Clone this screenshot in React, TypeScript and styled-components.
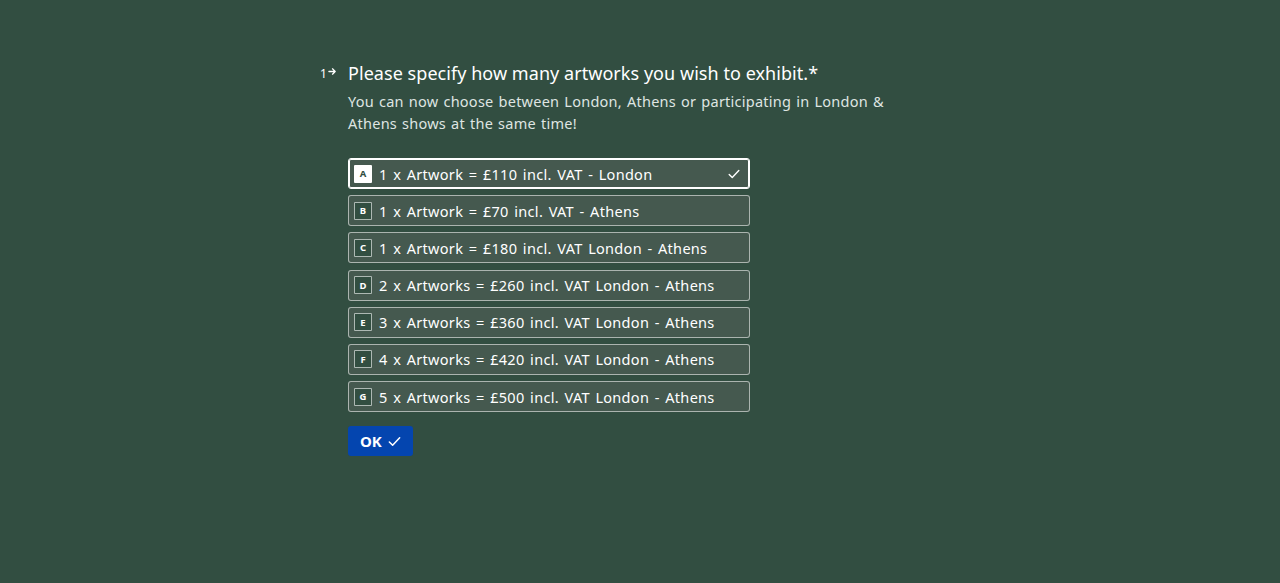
import React, { useState } from 'react';
import styled, { createGlobalStyle } from 'styled-components';

const GlobalStyle = createGlobalStyle`
  html, body {
    margin: 0;
    padding: 0;
    background: #324e41;
  }
  body {
    font-family: "Noto Sans", "Open Sans", Arial, sans-serif;
    color: #ffffff;
  }
`;

const Page = styled.div`
  min-height: 583px;
  display: flex;
  justify-content: center;
  padding-top: 60px;
  box-sizing: border-box;
`;

const Question = styled.div`
  display: flex;
  width: 640px;
`;

const Number = styled.div`
  width: 28px;
  flex-shrink: 0;
  display: flex;
  align-items: flex-start;
  gap: 1px;
  padding-top: 5px;
  font-size: 12px;
  color: #ffffff;
`;

const Body = styled.div`
  flex: 1;
  display: flex;
  flex-direction: column;
`;

const Title = styled.h1`
  margin: 0;
  font-size: 18px;
  font-weight: 400;
  line-height: 26px;
  letter-spacing: 0.05px;
`;

const Description = styled.p`
  margin: 4px 0 0;
  font-size: 14.5px;
  line-height: 22px;
  color: #dfe5e2;
  width: 545px;
  letter-spacing: 0.25px;
  word-spacing: 1px;
`;

const Options = styled.div`
  display: flex;
  flex-direction: column;
  gap: 6.2px;
  margin-top: 24px;
  width: 402px;
`;

const Option = styled.button<{ $selected: boolean }>`
  display: flex;
  align-items: center;
  height: 31px;
  box-sizing: border-box;
  padding: 0 8px 0 5px;
  background: #45594f;
  border: 1px solid ${p => (p.$selected ? '#ffffff' : 'rgba(255,255,255,0.55)')};
  box-shadow: ${p => (p.$selected ? 'inset 0 0 0 1px #ffffff' : 'none')};
  border-radius: 3px;
  color: #ffffff;
  font-family: inherit;
  font-size: 14.5px;
  letter-spacing: 0.3px;
  word-spacing: 1.5px;
  text-align: left;
  cursor: pointer;
`;

const Key = styled.span<{ $selected: boolean }>`
  width: 18px;
  height: 18px;
  box-sizing: border-box;
  display: inline-flex;
  align-items: center;
  justify-content: center;
  margin-right: 7px;
  font-size: 9.5px;
  font-weight: 700;
  letter-spacing: 0;
  border-radius: 1px;
  border: 1px solid rgba(255, 255, 255, 0.6);
  background: ${p => (p.$selected ? '#ffffff' : '#324e41')};
  color: ${p => (p.$selected ? '#324e41' : '#ffffff')};
`;

const Label = styled.span`
  flex: 1;
`;

const OkButton = styled.button`
  margin-top: 14px;
  align-self: flex-start;
  display: inline-flex;
  align-items: center;
  gap: 5px;
  height: 30px;
  padding: 0 11px 0 12px;
  background: #0445af;
  border: none;
  border-radius: 3px;
  color: #ffffff;
  font-family: inherit;
  font-size: 15px;
  font-weight: 700;
  cursor: pointer;
`;

const Check = ({ size = 14 }: { size?: number }) => (
  <svg width={size} height={size} viewBox="0 0 16 16" fill="none">
    <path d="M2.5 8.5l3.5 3.5 7.5-8" stroke="#fff" strokeWidth="1.6" strokeLinecap="round" strokeLinejoin="round" />
  </svg>
);

const Arrow = () => (
  <svg width="9" height="9" viewBox="0 0 10 10" fill="none" style={{ marginTop: 2 }}>
    <path d="M1 5h7M5 2l3 3-3 3" stroke="#fff" strokeWidth="1.4" strokeLinecap="round" strokeLinejoin="round" />
  </svg>
);

const choices = [
  '1 x Artwork = £110 incl. VAT - London',
  '1 x Artwork = £70 incl. VAT - Athens',
  '1 x Artwork = £180 incl. VAT London - Athens',
  '2 x Artworks = £260 incl. VAT London - Athens',
  '3 x Artworks = £360 incl. VAT London - Athens',
  '4 x Artworks = £420 incl. VAT London - Athens',
  '5 x Artworks = £500 incl. VAT London - Athens',
];

export default function App() {
  const [selected, setSelected] = useState(0);

  return (
    <>
      <GlobalStyle />
      <Page>
        <Question>
          <Number>
            1<Arrow />
          </Number>
          <Body>
            <Title>Please specify how many artworks you wish to exhibit.*</Title>
            <Description>
              You can now choose between London, Athens or participating in London &amp; Athens shows at the same time!
            </Description>
            <Options>
              {choices.map((c, i) => (
                <Option key={c} $selected={selected === i} onClick={() => setSelected(i)}>
                  <Key $selected={selected === i}>{String.fromCharCode(65 + i)}</Key>
                  <Label>{c}</Label>
                  {selected === i && <Check />}
                </Option>
              ))}
            </Options>
            <OkButton>
              OK <Check size={15} />
            </OkButton>
          </Body>
        </Question>
      </Page>
    </>
  );
}
